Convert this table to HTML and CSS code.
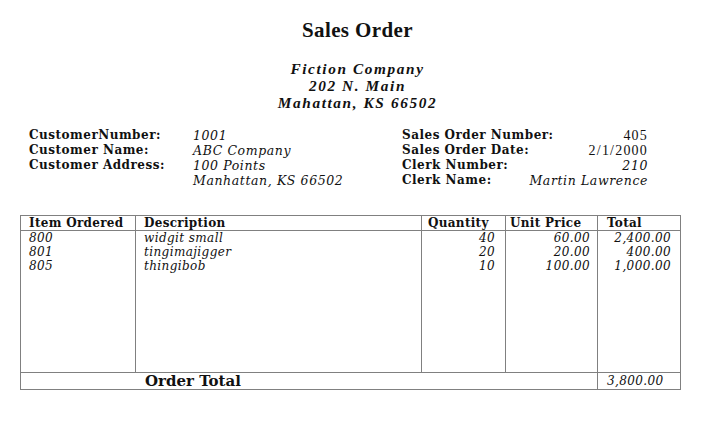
FILE: index.html
```html
<!DOCTYPE html>
<html lang="en">
<head>
<meta charset="utf-8">
<title>Sales Order</title>
<link rel="stylesheet" href="styles.css">
</head>
<body>
<div class="page">
  <header class="doc-head">
    <h1 class="title">Sales Order</h1>
    <div class="company">
      <div>Fiction Company</div>
      <div>202 N. Main</div>
      <div>Mahattan, KS 66502</div>
    </div>
  </header>

  <section class="info">
    <div class="info-left">
      <div class="label">CustomerNumber:</div><div class="value">1001</div>
      <div class="label">Customer Name:</div><div class="value">ABC Company</div>
      <div class="label">Customer Address:</div><div class="value">100 Points</div>
      <div class="label"></div><div class="value">Manhattan, KS 66502</div>
    </div>
    <div class="info-right">
      <div class="info-row"><span class="label">Sales Order Number:</span><span class="value plain">405</span></div>
      <div class="info-row"><span class="label">Sales Order Date:</span><span class="value plain">2/1/2000</span></div>
      <div class="info-row"><span class="label">Clerk Number:</span><span class="value">210</span></div>
      <div class="info-row"><span class="label">Clerk Name:</span><span class="value">Martin Lawrence</span></div>
    </div>
  </section>

  <table class="items">
    <colgroup>
      <col class="c-item"><col class="c-desc"><col class="c-qty"><col class="c-price"><col class="c-total">
    </colgroup>
    <thead>
      <tr>
        <th class="h-item">Item Ordered</th>
        <th class="h-desc">Description</th>
        <th class="h-qty">Quantity</th>
        <th class="h-price">Unit Price</th>
        <th class="h-total">Total</th>
      </tr>
    </thead>
    <tbody>
      <tr>
        <td class="d-item">800</td><td class="d-desc">widgit small</td><td class="d-qty">40</td><td class="d-price">60.00</td><td class="d-total">2,400.00</td>
      </tr>
      <tr>
        <td class="d-item">801</td><td class="d-desc">tingimajigger</td><td class="d-qty">20</td><td class="d-price">20.00</td><td class="d-total">400.00</td>
      </tr>
      <tr>
        <td class="d-item">805</td><td class="d-desc">thingibob</td><td class="d-qty">10</td><td class="d-price">100.00</td><td class="d-total">1,000.00</td>
      </tr>
      <tr class="filler">
        <td></td><td></td><td></td><td></td><td></td>
      </tr>
    </tbody>
    <tfoot>
      <tr class="sum">
        <td colspan="4" class="sum-label">Order Total</td>
        <td class="sum-value">3,800.00</td>
      </tr>
    </tfoot>
  </table>
</div>
</body>
</html>
```

FILE: styles.css
```css
html, body {
  margin: 0;
  padding: 0;
  background: #ffffff;
}

body {
  color: #111111;
  font-family: "DejaVu Serif", serif;
}

.page {
  width: 724px;
}

/* ---------- document head ---------- */
.doc-head {
  width: 715px;
  text-align: center;
  font-family: "Liberation Serif", "Times New Roman", serif;
  color: #111111;
}

.title {
  margin: 0;
  padding-top: 18px;
  font-size: 21px;
  line-height: 24px;
  font-weight: bold;
  letter-spacing: 0.4px;
}

.company {
  margin-top: 18px;
  font-size: 15.3px;
  line-height: 17px;
  font-weight: bold;
  font-style: italic;
  letter-spacing: 1.6px;
}

/* ---------- customer / order info ---------- */
.info {
  display: flex;
  margin-top: 17px;
  padding-left: 29px;
  line-height: 15px;
}

.info-left {
  width: 373px;
  display: grid;
  grid-template-columns: 164px auto;
}

.info-right {
  width: 246px;
  display: flex;
  flex-direction: column;
}

.info-row {
  display: flex;
  justify-content: space-between;
}

.label {
  font-family: "DejaVu Serif", serif;
  font-weight: bold;
  font-size: 12px;
  letter-spacing: 0.5px;
  white-space: nowrap;
}

.value {
  font-family: "DejaVu Serif", serif;
  font-style: italic;
  font-size: 12.5px;
  letter-spacing: 0.6px;
  white-space: nowrap;
}

.value.plain {
  font-family: "Liberation Serif", serif;
  font-style: normal;
  font-size: 14px;
  letter-spacing: 1.2px;
}

/* ---------- items table ---------- */
.items {
  margin-top: 27px;
  margin-left: 20px;
  width: 660px;
  table-layout: fixed;
  border-collapse: collapse;
  border: 1px solid #808080;
}

.c-item { width: 115px; }
.c-desc { width: 286px; }
.c-qty { width: 84px; }
.c-price { width: 92px; }
.c-total { width: 83px; }

.items th,
.items td {
  padding: 0;
  border-left: 1px solid #808080;
  border-right: 1px solid #808080;
  white-space: nowrap;
  overflow: hidden;
}

.items th {
  font-family: "DejaVu Serif", serif;
  font-weight: bold;
  font-size: 12px;
  letter-spacing: 0.3px;
  line-height: 14px;
  text-align: left;
  border-bottom: 1px solid #808080;
}

.items td {
  font-family: "DejaVu Serif", serif;
  font-style: italic;
  font-size: 12px;
  letter-spacing: 0.4px;
  line-height: 14px;
  height: 14px;
  vertical-align: top;
}

.items .h-item, .items .d-item { padding-left: 8px; }
.items .h-desc, .items .d-desc { padding-left: 8px; }
.items .h-qty { padding-left: 6px; }
.items .h-price { padding-left: 4px; }
.items .h-total { padding-left: 9px; }

.items .d-qty { text-align: right; padding-right: 10px; }
.items .d-price { text-align: right; padding-right: 7px; }
.items .d-total { text-align: right; padding-right: 9px; }

.items .filler td {
  height: 99px;
}

.items .sum td {
  border-top: 1px solid #808080;
  height: 16px;
  line-height: 16px;
  vertical-align: middle;
}

.items .sum-label {
  font-family: "DejaVu Serif", serif;
  font-style: normal;
  font-weight: bold;
  font-size: 15px;
  letter-spacing: 0;
  padding-left: 124px;
}

.items .sum-value {
  font-size: 12px;
  padding-left: 9px;
}
```
